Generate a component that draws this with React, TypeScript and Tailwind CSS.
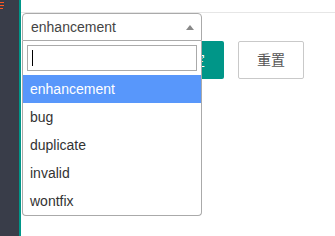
const options = ['enhancement', 'bug', 'duplicate', 'invalid', 'wontfix']

export default function App() {
  return (
    <div
      className="flex h-[236px] w-[335px] overflow-hidden bg-white"
      style={{ fontFamily: '"Liberation Sans", Arial, "Noto Sans CJK SC", sans-serif' }}
    >
      {/* barre latérale */}
      <div className="relative w-[19px] shrink-0 bg-[#393d49]">
        <div className="absolute left-0 top-[2px] flex w-[4px] flex-col gap-[2px]">
          <div className="h-[1px] bg-[#ff5722]" />
          <div className="h-[1px] bg-[#ff5722]" />
          <div className="h-[1px] w-[3px] bg-[#ff5722]" />
        </div>
      </div>
      <div className="w-[2px] shrink-0 bg-[#009688]" />

      <div className="relative flex-1">
        <div className="mt-[12px] h-px bg-[#e6e6e6]" />

        <div className="ml-[137px] mt-[28px] flex gap-[14px]">
          <button className="h-[38px] w-[66px] rounded-[2px] bg-[#009688] text-[14px] text-white">
            确定
          </button>
          <button className="h-[38px] w-[66px] rounded-[2px] border border-[#c9c9c9] bg-white text-[14px] text-[#555]">
            重置
          </button>
        </div>

        {/* select ouvert */}
        <div className="absolute left-[1px] top-[13px] z-10 w-[180px]">
          <div className="flex h-[28px] items-center justify-between rounded-t-[4px] border border-[#aaa] bg-white pl-[8px] pr-[7px]">
            <span className="text-[14px] text-[#444]">enhancement</span>
            <span className="h-0 w-0 border-x-[4px] border-b-[5px] border-x-transparent border-b-[#888]" />
          </div>
          <div className="rounded-b-[4px] border border-t-0 border-[#aaa] bg-white">
            <div className="px-[4px] pt-[4px] pb-[4px]">
              <div className="flex h-[26px] items-center border border-[#aaa] px-[4px]">
                <div className="h-[16px] w-px bg-black" />
              </div>
            </div>
            <ul className="text-[14px] text-[#333]">
              {options.map((o, i) => (
                <li
                  key={o}
                  className={`flex h-[28px] items-center px-[7px] ${i === 0 ? 'bg-[#5897fb] text-white' : ''}`}
                >
                  {o}
                </li>
              ))}
            </ul>
          </div>
        </div>
      </div>
    </div>
  )
}
